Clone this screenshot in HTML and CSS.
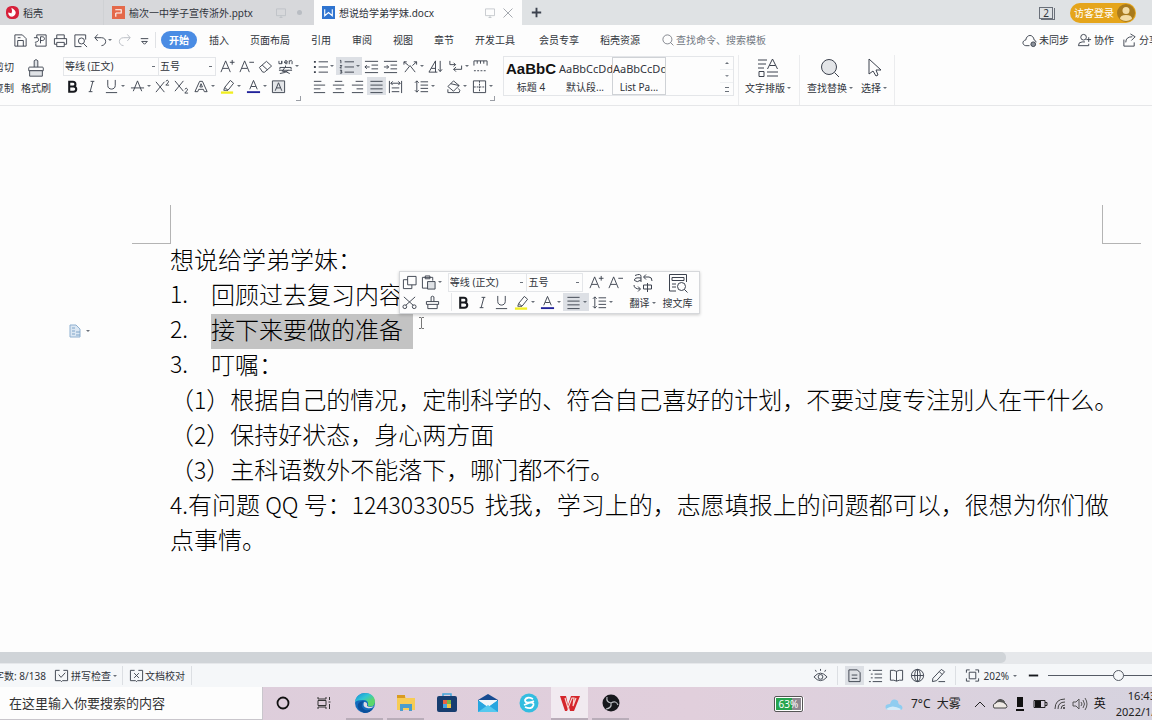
FILE: index.html
```html
<!DOCTYPE html>
<html lang="zh-CN">
<head>
  <meta charset="UTF-8" />
  <title>想说给学弟学妹.docx</title>
  <link rel="stylesheet" href="styles.css">
</head>
<body>
  <!-- 图标 -->
  <svg class="sprite" aria-hidden="true">
    <symbol id="save" viewBox="0 0 16 16"><path d="M2 14V2h8l4 4v8zM5 14V8h6v6M5 5h3"/></symbol>
    <symbol id="pdf" viewBox="0 0 16 16"><path d="M4 5V2h10v12H3v-3M1 5h4q3 4-3 5M8 11V4h2c3 0 3 4 0 4H8"/></symbol>
    <symbol id="print" viewBox="0 0 16 16"><path d="M4 6V2h8v4M4 12H1.500V6h13v6H12M4 10h8v4.500H4z"/></symbol>
    <symbol id="preview" viewBox="0 0 16 16"><path d="M13.500 7V2H2v12.500h7M11 11l4 4"/><circle cx="9" cy="8.500" r="3.200"/></symbol>
    <symbol id="undo" viewBox="0 0 16 16"><path d="M5 1.500L2 5l3 3.500M2 5h7c6 0 6 8 0 8.500"/></symbol>
    <symbol id="redo" viewBox="0 0 16 16"><path d="M11 1.500L14 5l-3 3.500M14 5H7c-6 0-6 8 0 8.500"/></symbol>
    <symbol id="more" viewBox="0 0 16 16"><path d="M4 6h8M5 9l3 3 3-3z"/></symbol>
    <symbol id="brush" viewBox="0 0 16 16"><path d="M6.500 7V2q1.500-1.500 3 0v5M1.500 10V7h13v3zM3 10v4.500h10V10"/></symbol>
    <symbol id="brush-big" viewBox="0 0 20 22"><path fill="#dfe2e6" d="M8 10V3q2-2.500 4 0v7"/><path d="M2 14v-3q0-1 1-1h14q1 0 1 1v3z"/><path fill="#dfe2e6" d="M3 14v6h14v-6z"/></symbol>
    <symbol id="a-up" viewBox="0 0 16 16"><path d="M1 14L6 2l5 12M3 10h6M13 1v5M10.500 3.500h5"/></symbol>
    <symbol id="a-down" viewBox="0 0 16 16"><path d="M1 14L6 2l5 12M3 10h6M11 3.500h5"/></symbol>
    <symbol id="eraser" viewBox="0 0 16 16"><path d="M1.500 9L9 2.500l5.500 5L7 14H5zM4.500 6.500L10 11.500"/></symbol>
    <symbol id="pinyin" viewBox="0 0 16 16"><path d="M1 2v3h3V2M4 2v3M6.500 3.500H10Q10 1.500 8 1.500 6 4 8 5h2M12 5.500v-4M12 2.500q3-2 3 0v3M8 7v2M2 11V9h12v2M7 9.500L4.500 13q4 0 8 2.500M1 12h14M11 12q-3 3-9 3.500"/></symbol>
    <symbol id="bold" viewBox="0 0 16 16"><path stroke-width="2.200" d="M4.500 3v10.500H9c4 0 4-5.500 0-5.500H4.500H8.500c3.500 0 3.500-5 0-5z"/></symbol>
    <symbol id="italic" viewBox="0 0 16 16"><path d="M7 2.500h4M5 13.500h4M9.500 2.500l-3 11"/></symbol>
    <symbol id="underline" viewBox="0 0 16 16"><path d="M4 1v6c0 5 8 5 8 0V1M2 14.500h12"/></symbol>
    <symbol id="strike" viewBox="0 0 16 16"><path d="M3.500 13L8 2l4.500 11M1 9.500h14"/></symbol>
    <symbol id="sup" viewBox="0 0 16 16"><path d="M1 3l9 11M10 3L1 14M11.500 2.500q1.500-2.500 3 0Q14.500 4 11.500 6.500H15"/></symbol>
    <symbol id="sub" viewBox="0 0 16 16"><path d="M1 2l9 11M10 2L1 13M11.500 11q1.500-2.500 3 0Q14.500 12 11.500 15H15"/></symbol>
    <symbol id="outline-a" viewBox="0 0 16 16"><path d="M1 13.500L6 2.500h3l5 11h-3L10 11H5l-1 2.500zM6.200 8.500h2.800L7.500 5z"/></symbol>
    <symbol id="marker" viewBox="0 0 16 16"><path fill="#fff" d="M5 9l6-7.500 3.500 3-6 7.500H4zM5 9l3.500 3"/><path stroke="#f1ee22" stroke-width="2.500" d="M1 14.500h13"/></symbol>
    <symbol id="color-a" viewBox="0 0 16 16"><path d="M4 11L8 1.500 12 11M5.500 8h5"/><path stroke="#22239a" stroke-width="2" d="M1 14h14"/></symbol>
    <symbol id="box-a" viewBox="0 0 16 16"><path fill="#e4e6e9" d="M1.500 2h13v12.500h-13z"/><path d="M4.500 12.500L8 4l3.500 8.500M6 9.500h4"/></symbol>
    <symbol id="bullets" viewBox="0 0 16 16"><path d="M6 3h10M6 8.500h10M6 14h10"/><path stroke-width="2" d="M1 3h2M1 8.500h2M1 14h2"/></symbol>
    <symbol id="numbers" viewBox="0 0 16 16"><path d="M6 3h10M6 8.500h10M6 14h10M1 1.500h1v3M1 7h2L1 9.500h2M1 12h2l-1 1.500h1V15H1"/></symbol>
    <symbol id="outdent" viewBox="0 0 16 16"><path d="M1 2.500h14M8 6.500h7M8 10.500h7M1 14.500h14M6 8.500H1M3 6.500l-2 2 2 2"/></symbol>
    <symbol id="indent" viewBox="0 0 16 16"><path d="M1 2.500h14M8 6.500h7M8 10.500h7M1 14.500h14M1 8.500h5M4 6.500l2 2-2 2"/></symbol>
    <symbol id="spread" viewBox="0 0 16 16"><path d="M2 14l5.500-7L13 14M1 3l5 4M14.500 3L10 7M1 6V3h3M11.500 3h3v3"/></symbol>
    <symbol id="sort" viewBox="0 0 16 16"><path d="M1 14L8 2v12M3.500 10H8M1 14h9M13 2v11M11 11l2 2.500 2-2.500"/></symbol>
    <symbol id="wrap" viewBox="0 0 16 16"><path d="M2 2v4h6M6 4l2 2-2 2M14.500 7v4H6M8.500 8.500L6 11l2.500 2.500"/></symbol>
    <symbol id="ruler" viewBox="0 0 16 16"><path d="M1 7V2h14v5M4.500 2v3M8 2v3M11.500 2v3"/><path stroke-dasharray="2 1.500" d="M1 12.500h14"/></symbol>
    <symbol id="left" viewBox="0 0 16 16"><path d="M2 2.500h8M2 6.500h12M2 10.500h7M2 14.500h12"/></symbol>
    <symbol id="center" viewBox="0 0 16 16"><path d="M4 2.500h8M2 6.500h12M5 10.500h6M2 14.500h12"/></symbol>
    <symbol id="right" viewBox="0 0 16 16"><path d="M6 2.500h8M2 6.500h12M7 10.500h7M2 14.500h12"/></symbol>
    <symbol id="justify" viewBox="0 0 16 16"><path d="M1.500 2.500h13M1.500 6.500h13M1.500 10.500h13M1.500 14.500h13"/></symbol>
    <symbol id="distribute" viewBox="0 0 16 16"><path d="M1.500 2v13M14.500 2v13M3 4.500h10M5 2.500l-2 2 2 2M11 2.500l2 2-2 2M4 9.500h8M4 13.500h8"/></symbol>
    <symbol id="spacing" viewBox="0 0 16 16"><path d="M3 2v12M1 4l2-2 2 2M1 12l2 2 2-2M7 3h8M7 6.500h8M7 10h8M7 13.500h8"/></symbol>
    <symbol id="fill" viewBox="0 0 16 16"><path d="M2 8l6-6 6 5-6 6zM5 5l9 2M13 10q3 2 1 4.500H2V11"/></symbol>
    <symbol id="table" viewBox="0 0 16 16"><path d="M1.500 2h13v12.500h-13z"/><path stroke-dasharray="2 1" d="M8 2v12M2 8.500h12"/></symbol>
    <symbol id="layout" viewBox="0 0 20 20"><path d="M0 2h9M0 6h8M0 10h6M1 13.500h5v5H1zM9 14h11M9 18h11M9.500 11l5-10 5 10M11.500 7.500h6"/></symbol>
    <symbol id="search" viewBox="0 0 20 20"><circle cx="9" cy="9" r="7.500"/><path d="M14.500 14.500L19 19"/></symbol>
    <symbol id="pointer" viewBox="0 0 20 20"><path d="M5 1v15l4-3 3 5 2-1-2-5h5z"/></symbol>
    <symbol id="cloud" viewBox="0 0 16 16"><path d="M8 13.500H4C0 13 0 8 4 7.500 5 1 12 1 13 7.500q2 .5 2 2.500"/><circle cx="12" cy="12" r="2.500" fill="#8c929b"/></symbol>
    <symbol id="people" viewBox="0 0 16 16"><circle cx="7" cy="4.500" r="3"/><path d="M1.500 13.500q0-4 4-4h3M1.500 13.500h11v-2M12.500 4.500v5M10 7h5"/></symbol>
    <symbol id="share" viewBox="0 0 16 16"><path d="M2 7v7h11v-4M4 10q0-6 7-6M9 1l5 3-4 4"/></symbol>
    <symbol id="screen" viewBox="0 0 16 16"><path d="M2 2.500h12v9H2zM8 11.500V14M6 14h4"/></symbol>
    <symbol id="close" viewBox="0 0 16 16"><path d="M2 2l12 12M14 2L2 14"/></symbol>
    <symbol id="plus" viewBox="0 0 16 16"><path stroke-width="2" d="M8 3v10M3 8h10"/></symbol>
    <symbol id="copy" viewBox="0 0 16 16"><path d="M6 1.500h9v9H6zM6 5H1.500v9.500h9v-4"/></symbol>
    <symbol id="paste" viewBox="0 0 16 16"><path d="M7 14H1.500V2.500h11V6M4.500 1h5v3h-5z"/><path fill="#dfe2e6" d="M7 7h8v8H7z"/></symbol>
    <symbol id="cut" viewBox="0 0 16 16"><path d="M2 2l10 9M14 2L4 11"/><circle cx="3" cy="12.500" r="2"/><circle cx="13" cy="12.500" r="2"/></symbol>
    <symbol id="translate" viewBox="0 0 20 20"><path d="M2 2.500q6-2.500 6 1V9M8 5Q1 4 1.500 7.500 4 10 8 7M11 4h5q3 0 3 4M13 1.500L10.500 4 13 6.500M1 12q0 4 6 4M5 13.500L7.500 16 5 18.500M10.500 12h8v4h-8zM14.500 10v9"/></symbol>
    <symbol id="library" viewBox="0 0 20 20"><path d="M8 18H1.500V1.500h17V9M4 4.500h12v3H4zM4 11h4M4 14h4M16.500 16.500l3 3"/><circle cx="13.500" cy="13.500" r="4"/></symbol>
    <symbol id="spell" viewBox="0 0 16 16"><path d="M6 2.500H1.500v11H7l1 1 1-1h5.500v-11H10M5 7l2.500 3L12 5"/></symbol>
    <symbol id="proof" viewBox="0 0 16 16"><path d="M6 2.500H1.500v11H7l1 1 1-1h5.500v-11H10M5.500 5.500l5 5M10.500 5.500l-5 5"/></symbol>
    <symbol id="eye" viewBox="0 0 16 16"><path d="M1 9.500q7-8 14 0-7 8-14 0zM8 1v2M2.500 2l1 2M13.500 2l-1 2"/><circle cx="8" cy="9.500" r="2.500"/></symbol>
    <symbol id="page" viewBox="0 0 16 16"><path d="M2 2h9l3 3v9.500H2zM5 7.500h6M5 11h6"/></symbol>
    <symbol id="outline" viewBox="0 0 16 16"><path d="M1 2.500h2M5 2.500h10M3 6.500h2M7 6.500h8M3 10.500h2M7 10.500h8M1 14.500h2M5 14.500h10"/></symbol>
    <symbol id="book" viewBox="0 0 16 16"><path d="M8 3.500Q5 2 1.500 2.500V13q4-.5 6.500 1 3-1.500 6.500-1V2.500Q11 2 8 3.500V14"/></symbol>
    <symbol id="globe" viewBox="0 0 16 16"><circle cx="8" cy="8" r="6.500"/><ellipse cx="8" cy="8" rx="3" ry="6.500"/><path d="M1.500 8h13M8 1.500v13"/></symbol>
    <symbol id="pen" viewBox="0 0 16 16"><path d="M2 11L11 1.500 14.500 4 6 13.500l-4.500 1zM9 4l3 3M8 14.500h7"/></symbol>
    <symbol id="fit" viewBox="0 0 16 16"><path d="M1.500 5V2H5M11 2h3.500v3M14.500 11v3H11M5 14H1.500v-3M4.500 4.500h7v7h-7z"/></symbol>
    <symbol id="minus" viewBox="0 0 16 16"><path stroke-width="2" d="M3 8h10"/></symbol>
  </svg>

  <header class="tabbar">
    <a class="tab tab-home" href="#">
      <svg class="logo" viewBox="0 0 12 12"><rect width="12" height="12" rx="5" fill="#d7203a"/><path d="M5 1.500q4 2 4 5Q8 10 5 10q0-3-2-4l2 1q1-3 0-5.500z" fill="#fff"/><path d="M2 6l3 1v3Q2 9 2 6z" fill="#fff"/></svg>
      稻壳
    </a>
    <a class="tab tab-ppt" href="#">
      <svg class="logo" viewBox="0 0 12 12"><rect width="12" height="12" fill="#e4694a"/><path d="M3.500 10V6.500M3 3.500h5.500v3h-5" fill="none" stroke="#fff"/></svg>
      榆次一中学子宣传浙外.pptx
      <svg class="icon small faint push"><use href="#screen"/></svg>
      <span class="dot"></span>
    </a>
    <a class="tab tab-doc" href="#">
      <svg class="logo" viewBox="0 0 12 12"><rect width="12" height="12" fill="#2f74d0"/><path d="M2.500 3v6l3.500-3 3.500 3V3" fill="none" stroke="#fff"/></svg>
      想说给学弟学妹.docx
      <svg class="icon small faint push"><use href="#screen"/></svg>
      <svg class="icon small mid"><use href="#close"/></svg>
    </a>
    <button class="new-tab" aria-label="新建"><svg class="icon"><use href="#plus"/></svg></button>
    <span class="windows">2</span>
    <button class="login">访客登录
      <svg viewBox="0 0 18 18"><circle cx="9" cy="9" r="9" fill="#a87a1d"/><circle cx="9" cy="6.500" r="3.500" fill="#f3dca4"/><path d="M3 15q0-4 6-4t6 4q-6 4-12 0z" fill="#f3dca4"/></svg>
    </button>
  </header>

  <nav class="menubar">
    <div class="quick">
      <button aria-label="保存"><svg class="icon"><use href="#save"/></svg></button>
      <button aria-label="输出PDF"><svg class="icon"><use href="#pdf"/></svg></button>
      <button aria-label="打印"><svg class="icon"><use href="#print"/></svg></button>
      <button aria-label="预览"><svg class="icon"><use href="#preview"/></svg></button>
      <button class="drop" aria-label="撤销"><svg class="icon"><use href="#undo"/></svg></button>
      <button aria-label="恢复"><svg class="icon faint"><use href="#redo"/></svg></button>
      <button aria-label="更多"><svg class="icon"><use href="#more"/></svg></button>
    </div>
    <button class="menu-active">开始</button>
    <div class="menus">
      <a href="#">插入</a>
      <a href="#">页面布局</a>
      <a href="#">引用</a>
      <a href="#">审阅</a>
      <a href="#">视图</a>
      <a href="#">章节</a>
      <a href="#">开发工具</a>
      <a class="wide" href="#">会员专享</a>
      <a href="#">稻壳资源</a>
    </div>
    <label class="command"><svg class="icon small"><use href="#search"/></svg><input type="text" placeholder="查找命令、搜索模板" /></label>
    <div class="account">
      <a href="#"><svg class="icon"><use href="#cloud"/></svg>未同步</a>
      <a href="#"><svg class="icon"><use href="#people"/></svg>协作</a>
      <a href="#"><svg class="icon"><use href="#share"/></svg>分享</a>
    </div>
  </nav>

  <section class="ribbon">
    <div class="clip">
      <button>剪切</button>
      <button>复制</button>
    </div>
    <button class="big format"><svg class="icon large"><use href="#brush-big"/></svg>格式刷</button>

    <div class="group font-group">
      <div class="row">
        <select class="font-name" aria-label="字体"><option>等线 (正文)</option></select>
        <select class="font-size" aria-label="字号"><option>五号</option></select>
        <button aria-label="增大字号"><svg class="icon"><use href="#a-up"/></svg></button>
        <button aria-label="减小字号"><svg class="icon"><use href="#a-down"/></svg></button>
        <button aria-label="清除格式"><svg class="icon"><use href="#eraser"/></svg></button>
        <button class="drop" aria-label="拼音"><svg class="icon"><use href="#pinyin"/></svg></button>
      </div>
      <div class="row">
        <button aria-label="加粗"><svg class="icon dark"><use href="#bold"/></svg></button>
        <button aria-label="倾斜"><svg class="icon"><use href="#italic"/></svg></button>
        <button class="drop" aria-label="下划线"><svg class="icon"><use href="#underline"/></svg></button>
        <button class="drop" aria-label="删除线"><svg class="icon"><use href="#strike"/></svg></button>
        <button aria-label="上标"><svg class="icon"><use href="#sup"/></svg></button>
        <button aria-label="下标"><svg class="icon"><use href="#sub"/></svg></button>
        <button class="drop" aria-label="文字效果"><svg class="icon"><use href="#outline-a"/></svg></button>
        <button class="drop" aria-label="突出显示"><svg class="icon"><use href="#marker"/></svg></button>
        <button class="drop" aria-label="字体颜色"><svg class="icon"><use href="#color-a"/></svg></button>
        <button aria-label="字符底纹"><svg class="icon"><use href="#box-a"/></svg></button>
      </div>
    </div>

    <div class="group para-group">
      <div class="row">
        <button class="drop" aria-label="项目符号"><svg class="icon"><use href="#bullets"/></svg></button>
        <button class="drop on" aria-label="编号"><svg class="icon"><use href="#numbers"/></svg></button>
        <button aria-label="减少缩进"><svg class="icon"><use href="#outdent"/></svg></button>
        <button aria-label="增加缩进"><svg class="icon"><use href="#indent"/></svg></button>
        <button class="drop" aria-label="中文版式"><svg class="icon"><use href="#spread"/></svg></button>
        <button aria-label="排序"><svg class="icon"><use href="#sort"/></svg></button>
        <button class="drop" aria-label="换行"><svg class="icon"><use href="#wrap"/></svg></button>
        <button aria-label="制表位"><svg class="icon"><use href="#ruler"/></svg></button>
      </div>
      <div class="row">
        <button aria-label="左对齐"><svg class="icon"><use href="#left"/></svg></button>
        <button aria-label="居中"><svg class="icon"><use href="#center"/></svg></button>
        <button aria-label="右对齐"><svg class="icon"><use href="#right"/></svg></button>
        <button class="on" aria-label="两端对齐"><svg class="icon"><use href="#justify"/></svg></button>
        <button aria-label="分散对齐"><svg class="icon"><use href="#distribute"/></svg></button>
        <button class="drop spaced" aria-label="行距"><svg class="icon"><use href="#spacing"/></svg></button>
        <button class="drop spaced" aria-label="底纹"><svg class="icon"><use href="#fill"/></svg></button>
        <button class="drop" aria-label="边框"><svg class="icon"><use href="#table"/></svg></button>
      </div>
    </div>

    <div class="gallery">
      <button class="style"><b>AaBbC</b><span>标题 4</span></button>
      <button class="style"><i>AaBbCcDd</i><span>默认段...</span></button>
      <button class="style picked"><i>AaBbCcDd</i><span>List Pa...</span></button>
      <div class="scroller"><span class="up"></span><span></span><span class="last"></span></div>
    </div>
    <div class="tools tools-first">
      <button class="big"><svg class="icon large"><use href="#layout"/></svg><span class="caret">文字排版</span></button>
    </div>
    <div class="tools">
      <button class="big"><svg class="icon large shaded"><use href="#search"/></svg><span class="caret">查找替换</span></button>
      <button class="big"><svg class="icon large"><use href="#pointer"/></svg><span class="caret">选择</span></button>
    </div>
  </section>

  <main class="editor">
    <div class="corners"><span class="corner"></span><span class="corner corner-right"></span></div>
    <article class="paper">
      <p>想说给学弟学妹：</p>
      <p class="item"><span class="num">1.</span>回顾过去复习内容</p>
      <p class="item"><span class="num">2.</span><mark>接下来要做的准备</mark></p>
      <p class="item"><span class="num">3.</span>叮嘱：</p>
      <p>（<span class="latin">1</span>）根据自己的情况，定制科学的、符合自己喜好的计划，不要过度专注别人在干什么。</p>
      <p>（<span class="latin">2</span>）保持好状态，身心两方面</p>
      <p>（<span class="latin">3</span>）主科语数外不能落下，哪门都不行。</p>
      <p><span class="latin">4.</span>有问题<span class="latin"> QQ </span>号：<span class="latin">1243033055&nbsp; </span>找我，学习上的，志愿填报上的问题都可以，很想为你们做<br>点事情。</p>
    </article>

    <button class="para-mark drop" aria-label="段落布局"><svg viewBox="0 0 12 14"><path d="M1 1h6l4 4v8H1z" fill="#dbe7f3" stroke="#8fb0d0"/><path d="M3 4h3M3 7h3M3 10h3M7 8h4M7 11h4" stroke="#7ea4c8"/></svg></button>
    <svg class="ibeam" viewBox="0 0 5 12"><path d="M0 .5h2l.5.5.5-.5h2M2.500 1v10M0 11.500h2l.5-.5.5.5h2" fill="none" stroke="#777"/></svg>

    <div class="float">
      <div class="float-main">
        <div class="row">
          <button aria-label="复制"><svg class="icon"><use href="#copy"/></svg></button>
          <button class="drop" aria-label="粘贴"><svg class="icon"><use href="#paste"/></svg></button>
          <select class="font-name" aria-label="字体"><option>等线 (正文)</option></select>
          <select class="font-size" aria-label="字号"><option>五号</option></select>
          <button aria-label="增大字号"><svg class="icon"><use href="#a-up"/></svg></button>
          <button aria-label="减小字号"><svg class="icon"><use href="#a-down"/></svg></button>
        </div>
        <div class="row">
          <button aria-label="剪切"><svg class="icon"><use href="#cut"/></svg></button>
          <button class="brush" aria-label="格式刷"><svg class="icon"><use href="#brush"/></svg></button>
          <button aria-label="加粗"><svg class="icon dark"><use href="#bold"/></svg></button>
          <button aria-label="倾斜"><svg class="icon"><use href="#italic"/></svg></button>
          <button aria-label="下划线"><svg class="icon"><use href="#underline"/></svg></button>
          <button class="drop" aria-label="突出显示"><svg class="icon"><use href="#marker"/></svg></button>
          <button class="drop" aria-label="字体颜色"><svg class="icon"><use href="#color-a"/></svg></button>
          <button class="drop on" aria-label="对齐"><svg class="icon"><use href="#justify"/></svg></button>
          <button class="drop" aria-label="行距"><svg class="icon"><use href="#spacing"/></svg></button>
        </div>
      </div>
      <button class="big"><svg class="icon large"><use href="#translate"/></svg><span class="caret">翻译</span></button>
      <button class="big"><svg class="icon large"><use href="#library"/></svg>搜文库</button>
    </div>
  </main>

  <div class="hscroll"><span></span></div>

  <footer class="status">
    <span class="count">字数: 8/138</span>
    <button class="check drop"><svg class="icon"><use href="#spell"/></svg>拼写检查</button>
    <button class="check"><svg class="icon"><use href="#proof"/></svg>文档校对</button>
    <div class="views">
      <button class="eye" aria-label="护眼模式"><svg class="icon"><use href="#eye"/></svg></button>
      <button class="on" aria-label="页面视图"><svg class="icon"><use href="#page"/></svg></button>
      <button aria-label="大纲"><svg class="icon"><use href="#outline"/></svg></button>
      <button aria-label="阅读版式"><svg class="icon"><use href="#book"/></svg></button>
      <button aria-label="Web版式"><svg class="icon"><use href="#globe"/></svg></button>
      <button aria-label="写作模式"><svg class="icon"><use href="#pen"/></svg></button>
    </div>
    <button class="zoom-level drop"><svg class="icon"><use href="#fit"/></svg>202%</button>
    <button class="zoom-out" aria-label="缩小"><svg class="icon dark"><use href="#minus"/></svg></button>
    <input class="zoom" type="range" min="0" max="100" value="50" aria-label="缩放" />
  </footer>

  <div class="taskbar">
    <input class="find" type="text" placeholder="在这里输入你要搜索的内容" aria-label="搜索" />
    <div class="apps">
      <button aria-label="Cortana"><svg viewBox="0 0 20 20"><circle cx="10" cy="10" r="5.500" fill="none" stroke="#111" stroke-width="1.800"/></svg></button>
      <button aria-label="任务视图"><svg viewBox="0 0 20 20"><path d="M4 4v2h8V4M4 16v-2h8v2M4 7.500h8v5H4zM15.500 4v3M15.500 11v5M14.500 9h2" fill="none" stroke="#333"/></svg></button>
      <button class="open" aria-label="Edge"><svg viewBox="0 0 20 20"><defs><linearGradient id="edge" x2="1" y2="1"><stop stop-color="#1689d8"/><stop offset=".4" stop-color="#30c5d5"/><stop offset=".7" stop-color="#5bd66b"/></linearGradient></defs><circle cx="10" cy="10" r="10" fill="#136bbd"/><path d="M0 9C1-3 20-3 20 9q-1 6-7 4 1-6-5-6-6 0-8 2z" fill="url(#edge)"/><path d="M9 8q-5 5 1 9 5 1 8-2-2 5-9 5-8-4-6-9 2-3 6-3z" fill="#0b4f9b"/><path d="M9 9q4 0 3 4 3 2 7 0-2 3-7 2-5-1-3-6z" fill="#e2dbe4"/></svg></button>
      <button class="open" aria-label="文件资源管理器"><svg viewBox="0 0 20 20"><path d="M1 3h8l1 2h9v12H1z" fill="#f7cc55"/><path d="M1 2h8v3H1z" fill="#d99b21"/><path d="M4 18v-7h12v7h-3v-3H7v3z" fill="#4a9dcc"/></svg></button>
      <button aria-label="应用商店"><svg viewBox="0 0 20 20"><path d="M6 4V1h8v3" fill="none" stroke="#41a6dc" stroke-width="1.500"/><rect x="0" y="3" width="20" height="16" rx="2" fill="#173d70"/><path d="M6 7h4v4H6z" fill="#ea6344"/><path d="M10 7h4v4h-4z" fill="#79b84a"/><path d="M6 11h4v4H6z" fill="#45a6e4"/><path d="M10 11h4v4h-4z" fill="#f4c342"/></svg></button>
      <button aria-label="邮件"><svg viewBox="0 0 20 20"><path d="M0 7l10-6 10 6v12H0z" fill="#164b91"/><path d="M1 7h18v8H1z" fill="#f2f6f9"/><path d="M0 7l10 7 10-7v12H0z" fill="#27a5df"/><path d="M1 7h18l-9 7z" fill="#f2f6f9"/><path d="M0 19l10-7 10 7z" fill="#55c9ef"/></svg></button>
      <button aria-label="浏览器"><svg viewBox="0 0 20 20"><circle cx="10" cy="10" r="9.500" fill="#33bde0"/><path d="M14 6Q8 3 6 7q0 3 4 2.500 5-.5 4.500 2.500Q13 17 6 14M15 8L5 12" fill="none" stroke="#fff" stroke-width="1.800"/></svg></button>
      <button class="open current" aria-label="WPS"><svg viewBox="0 0 20 20"><path d="M0 3h6l2 9 3-9h9l-6 15h-4l-1-4-2 4H5z" fill="#d5262c"/><path d="M5 5l3 10 4-10h2l-1 8 3-8" fill="none" stroke="#f6d7d2" stroke-width="1.200"/></svg></button>
      <button class="open" aria-label="OBS"><svg viewBox="0 0 20 20"><circle cx="10" cy="10" r="8.500" fill="#17181c"/><path d="M10 10Q5 9 6 4M10 10q5-3 7 2M10 10q1 5-5 6" fill="none" stroke="#b9bbc0" stroke-width="1.200"/></svg></button>
    </div>
    <span class="battery"><b>63%</b></span>
    <div class="tray">
      <svg class="weather" viewBox="0 0 18 14"><path d="M1 12q-2-5 4-5 2-7 8-3 0 4 3 4 3 3 0 5H3z" fill="#8fcdf0"/><path d="M1 12q6-5 15 0l-1 1H3z" fill="#d5ecf8"/></svg>
      <span class="temp">7°C&nbsp; 大雾</span>
      <svg viewBox="0 0 16 16"><path d="M3 11l5-5 5 5" fill="none" stroke="#222"/></svg>
      <svg viewBox="0 0 16 16"><path d="M2 12q-2-4 2-5 3-6 8-2 0 2 2 3 2 3 0 4z" fill="#eee9e4" stroke="#444"/><path d="M3 7q4-6 9-2l2 4q-4-5-11-2z" fill="#555"/></svg>
      <svg viewBox="0 0 16 16"><path d="M5 1h6v10H5zM4 13h8v2H4z" fill="#111"/></svg>
      <svg viewBox="0 0 16 16"><path d="M2 4.500h11v7H2zM13 6.500h2v3h-2" fill="none" stroke="#222"/><path d="M3 5h6v6H3z" fill="#111"/></svg>
      <svg viewBox="0 0 16 16"><path d="M3 13Q3 3 13 3M6 13q0-7 7-7M9 13q0-4 4-4" fill="none" stroke="#444"/><circle cx="12" cy="12" r="1" fill="#333"/></svg>
      <svg viewBox="0 0 16 16"><path d="M1 6h3l3-3v10l-3-3H1zM9 6q2 2 0 4M11 4q3 4 0 8M13 2q4 6 0 12" fill="none" stroke="#555"/></svg>
      <span class="ime">英</span>
    </div>
    <div class="clock"><span>16:43</span><span>2022/1/11</span></div>
  </div>
</body>
</html>
```
FILE: styles.css
```css
* { box-sizing: border-box; }
body {
  margin: 0;
  height: 100vh;
  overflow: hidden;
  display: flex;
  flex-direction: column;
  background: #fdfdfd;
  color: #30343b;
  font: 10px/16px "Noto Sans", "Noto Sans CJK SC", sans-serif;
}
button, input, select { font: inherit; color: inherit; }
button {
  display: flex;
  align-items: center;
  justify-content: center;
  padding: 0;
  border: 0;
  background: none;
  white-space: nowrap;
}
a { color: inherit; text-decoration: none; white-space: nowrap; }
.sprite { display: none; }
.icon {
  flex: none;
  width: 15px;
  height: 15px;
  fill: none;
  stroke: #3c424e;
}
.icon.small { width: 12px; height: 12px; }
.icon.large { width: 20px; height: 20px; }
.icon.faint { stroke: #b9bdc3; }
.icon.mid { stroke: #888d95; }
.icon.dark { stroke: #16181d; }
.icon.shaded { fill: #e3e5e8; }

/* 下拉小箭头 */
.drop::after, .caret::after {
  content: "";
  flex: none;
  border: 2px solid transparent;
  border-top-color: #6a7079;
  border-bottom: 0;
}
.caret { display: flex; align-items: center; gap: 2px; }
.on { background: #dde0e5; }

/* 标签栏 */
.tabbar {
  flex: none;
  display: flex;
  align-items: center;
  height: 25px;
  background: #dfe2e4;
}
.tab {
  display: flex;
  align-items: center;
  gap: 4px;
  height: 25px;
  padding: 0 8px;
  background: #d7d8db;
}
.tab-home { width: 103px; padding-left: 6px; }
.tab-ppt { width: 211px; padding-left: 8px; border-left: 1px solid #cfd1d4; }
.tab-doc { width: 208px; background: #fdfdfd; }
.logo { width: 13px; height: 13px; flex: none; }
.push { margin-left: auto; }
.dot { width: 5px; height: 5px; margin: 0 4px 0 6px; border-radius: 50%; background: #b9bdc3; }
.tab-doc .mid { margin-left: 2px; }
.new-tab { width: 28px; height: 25px; }
.windows {
  margin-left: auto;
  width: 14px;
  height: 12px;
  border: 1px solid #6a7079;
  box-shadow: 1px 0 0 #dfe2e4, 2px 1px 0 #6a7079;
  text-align: center;
  line-height: 10px;
}
.login {
  height: 20px;
  gap: 3px;
  margin: 0 16px 0 17px;
  padding: 0 1px 0 4px;
  border-radius: 10px;
  background: #e5a51b;
  color: #fff;
}
.login svg { width: 18px; height: 18px; }

/* 菜单栏 */
.menubar { flex: none; display: flex; align-items: center; height: 30px; }
.quick { display: flex; margin-left: 10px; padding-right: 1px; border-right: 1px solid #e0e2e5; }
.quick button { width: 20px; height: 16px; }
.quick .drop { width: 24px; }
.menu-active {
  width: 36px;
  height: 18px;
  margin-left: 5px;
  border-radius: 9px;
  background: #4a8ce4;
  color: #fff;
  font-weight: bold;
}
.menus { display: flex; gap: 21px; margin-left: 12px; }
.menus .wide { margin-left: 3px; }
.command { display: flex; align-items: center; gap: 2px; margin-left: 22px; }
.command input { width: 110px; padding: 0; border: 0; background: none; }
.command input::placeholder { color: #737983; opacity: 1; }
.account { display: flex; gap: 8px; margin: 0 -7px 0 auto; }
.account a { display: flex; align-items: center; gap: 2px; }

/* 功能区 */
.ribbon {
  flex: none;
  display: flex;
  height: 51px;
  border-bottom: 1px solid #e6e7e9;
}
.row { display: flex; align-items: center; height: 20px; }
.row button { width: 19px; height: 18px; }
.row .drop { width: 26px; gap: 2px; }
.row .spaced { margin-left: 6px; }
.clip { display: flex; flex-direction: column; gap: 4px; margin: 3px 0 0 -6px; width: 20px; }
.clip button { height: 17px; }
.big { flex-direction: column; height: 40px; gap: 2px; }
.format { width: 44px; }
.ribbon .big { margin-top: 2px; }
.group { position: relative; padding-top: 1px; }
.group::after {
  content: "";
  position: absolute;
  right: 0;
  bottom: 4px;
  width: 4px;
  height: 4px;
  border: solid #9a9ea5;
  border-width: 0 1px 1px 0;
}
.font-group { width: 238px; margin-left: 5px; }
.para-group { width: 185px; margin-left: 9px; }
select {
  height: 19px;
  padding: 0 1px;
  border: 1px solid #e4e6e9;
  border-radius: 0;
  appearance: none;
  background: linear-gradient(#6a7079, #6a7079) no-repeat right 3px center / 3px 1px #fdfdfd;
}
.font-name { width: 96px; }
.font-size { width: 57px; margin-right: 2px; border-left: 0; }
.gallery {
  display: flex;
  width: 231px;
  height: 40px;
  margin: 1px 4px 0 8px;
  border: 1px solid #e4e6e9;
}
.style {
  flex-direction: column;
  align-items: stretch;
  width: 54px;
  padding: 2px 1px 0;
  overflow: hidden;
}
.style b { font: bold 15px/20px "Liberation Sans", sans-serif; color: #111; }
.style i { font-size: 11px; font-style: normal; line-height: 20px; text-align: left; }
.picked { border: 1px solid #cfd2d6; padding: 1px 0 0; }
.scroller {
  display: flex;
  flex-direction: column;
  width: 13px;
  margin-left: auto;
}
.scroller span { flex: 1; display: grid; place-items: center; border-bottom: 1px solid #eef0f2; }
.scroller span::after { content: ""; border: 2px solid transparent; border-top-color: #8a8f97; border-bottom: 0; }
.scroller .up::after { border: 2px solid transparent; border-bottom-color: #6a7079; border-top: 0; }
.scroller .last { border-bottom: 0; }
.scroller .last::after { width: 4px; height: 3px; border: solid #6a7079; border-width: 1px 0; }
.tools { display: flex; gap: 8px; padding: 0 7px; border-right: 1px solid #ebecee; }
.tools-first { border-left: 1px solid #ebecee; padding: 0 8px 0 6px; }

/* 文档 */
.editor { position: relative; flex: 1; min-height: 0; padding-top: 99px; overflow: hidden; }
.corners { display: flex; justify-content: space-between; margin: 0 11px 0 132px; }
.corner { width: 39px; height: 39px; border: solid #b4b4b4; border-width: 0 1px 1px 0; }
.corner-right { border-width: 0 0 1px 1px; }
.paper {
  margin: -3px 0 0 170px;
  color: #000;
  font: 300 24px/35px "Noto Sans CJK SC", sans-serif;
  white-space: nowrap;
}
.paper p { margin: 0; }
.item { display: flex; }
.num { width: 41px; font-size: 23px; }
.latin { font-size: 23px; line-height: 1; }
mark {
  margin-bottom: -3px;
  padding: 0 10px 3px 0;
  background: linear-gradient(transparent 3px, #c3c3c3 3px);
  color: inherit;
}
.para-mark { position: absolute; left: 69px; top: 218px; gap: 5px; }
.para-mark svg { width: 12px; height: 14px; }
.ibeam { position: absolute; left: 419px; top: 211px; width: 5px; height: 12px; }

/* 浮动工具栏 */
.float {
  position: absolute;
  left: 399px;
  top: 165px;
  display: flex;
  width: 301px;
  height: 43px;
  border: 1px solid #d6d8db;
  background: #fdfdfd;
  box-shadow: 0 1px 3px rgba(0,0,0,0.2);
}
.float-main { width: 225px; }
.float .font-name { width: 80px; margin-left: 3px; }
.float .font-size { width: 56px; margin-right: 4px; }
.float .brush { width: 29px; margin-left: 4px; margin-right: 2px; padding-right: 9px; border-right: 1px solid #e4e6e9; }
.float .big { width: 35px; }

/* 滚动条和状态栏 */
.hscroll { flex: none; height: 12px; background: #e6e8eb; }
.hscroll span { display: block; width: 1006px; max-width: 100%; height: 11px; border-radius: 0 5px 5px 0; background: #d0d4d8; }
.status {
  flex: none;
  display: flex;
  align-items: center;
  height: 23px;
  background: #f5f7f9;
  white-space: nowrap;
}
.status button { height: 19px; }
.count { margin-left: -6px; width: 54px; }
.check { gap: 1px; padding: 0 6px; border-right: 1px solid #dcdfe3; }
.check.drop { padding-right: 5px; gap: 2px; }
.views { display: flex; gap: 2px; margin-left: auto; padding-right: 7px; border-right: 1px solid #dcdfe3; }
.views button { width: 19px; }
.views .eye { width: 26px; padding-right: 8px; margin-right: 5px; border-right: 1px solid #dcdfe3; }
.zoom-level { gap: 4px; margin-left: 9px; }
.zoom-out { margin: 0 7px 0 9px; }
.zoom {
  flex: none;
  width: 140px;
  height: 12px;
  margin: 0 -36px 0 0;
  appearance: none;
  background: linear-gradient(#555b65, #555b65) no-repeat center / 100% 1px;
}
.zoom::-webkit-slider-thumb {
  appearance: none;
  width: 11px;
  height: 11px;
  border: 1px solid #555b65;
  border-radius: 50%;
  background: #f5f7f9;
}

/* 任务栏 */
.taskbar {
  flex: none;
  display: flex;
  align-items: center;
  height: 33px;
  background: linear-gradient(90deg, #dccddb, #e1cfdc 60%, #d6d3df);
  color: #222;
  white-space: nowrap;
}
.find {
  width: 263px;
  height: 33px;
  padding: 0 9px;
  border: 1px solid #c9c6cc;
  border-width: 0 1px 1px 0;
  background: #fdfdfd;
  font-size: 13px;
}
.find::placeholder { color: #333; opacity: 1; }
.apps { display: flex; gap: 4px; margin-left: 1px; }
.apps button { width: 37px; height: 33px; border-bottom: 2px solid transparent; }
.apps svg { width: 20px; height: 20px; }
.apps .open { border-color: #b9adb9; }
.apps .current { background: #f1eaf0; }
.battery {
  width: 29px;
  height: 16px;
  margin-left: auto;
  padding: 1px;
  border: 1px solid #555;
  border-radius: 2px;
  background: #fff;
  box-shadow: 2px 0 0 -1px #fff;
}
.battery b {
  display: block;
  height: 12px;
  background: linear-gradient(90deg, #27a44e 63%, #8e8790 63%);
  color: #fff;
  font-weight: normal;
  line-height: 12px;
  text-align: center;
}
.tray { display: flex; align-items: center; gap: 4px; margin-left: 82px; }
.tray svg { width: 16px; height: 16px; }
.tray .weather { width: 18px; }
.temp { margin: 0 7px 0 4px; font-size: 12px; }
.ime { margin-left: 2px; font-size: 12px; color: #111; }
.clock {
  display: flex;
  flex-direction: column;
  align-items: center;
  margin: 0 -16px 0 10px;
  font-size: 11px;
}
```
